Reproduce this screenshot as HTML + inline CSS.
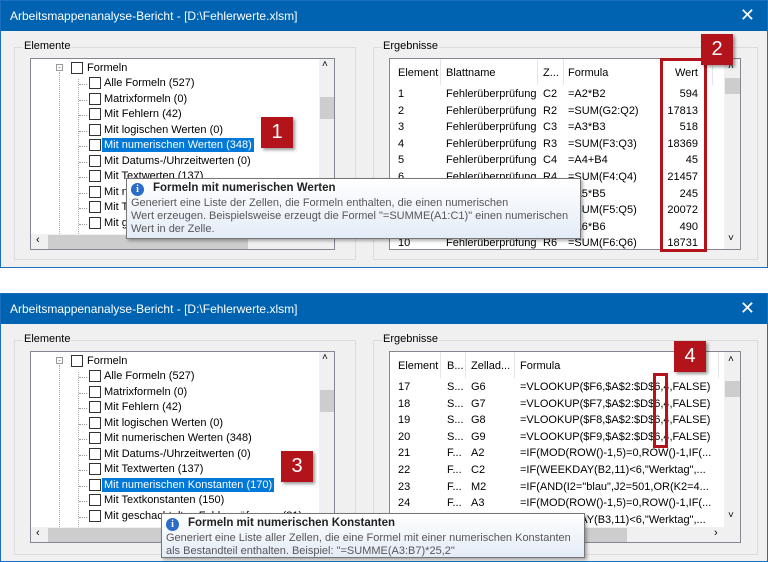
<!DOCTYPE html>
<html><head><meta charset="utf-8"><style>
*{box-sizing:border-box;margin:0;padding:0}
body{width:768px;height:562px;background:#fff;position:relative;overflow:hidden;font-family:"Liberation Sans",sans-serif;font-size:11px;color:#000}
.a{position:absolute;white-space:nowrap}
.win{position:absolute;left:0;width:768px;background:#f0f0f0;border:1px solid #1a6fc0}
.tb{position:absolute;left:0;top:0;width:100%;height:30px;background:#0063b1;color:#fff;font-size:12px}
.tb span{position:absolute;left:9px;top:8px}
.tb i{position:absolute;right:12px;top:4px;font-style:normal;font-size:18px}
.grp{position:absolute;border:1px solid #dcdcdc}
.gl{position:absolute;top:-8px;left:8px;background:#f0f0f0;padding:0 1px;font-size:11px}
.box{position:absolute;background:#fff;border:1px solid #828790;overflow:hidden}
.cb{position:absolute;width:12px;height:12px;border:1px solid #333;background:#fff}
.dot{position:absolute;border-top:1px dotted #999;width:8px}
.vs{position:absolute;background:#f0f0f0}
.thumb{position:absolute;background:#cdcdcd}
.badge{position:absolute;width:32px;height:31px;background:#b3141b;color:#fff;font-size:20px;text-align:center;line-height:31px;box-shadow:2px 2px 3px rgba(0,0,0,.4)}
.tip{position:absolute;border:1px solid #767676;background:linear-gradient(#fff,#e4ecf7);box-shadow:2px 2px 3px rgba(0,0,0,.3);color:#575757;font-size:11px;line-height:13px;white-space:nowrap}
.tip b{display:block;color:#222;font-size:11.5px;margin:3px 0 2px 22px}
.ic{position:absolute;left:4px;top:4px;width:13px;height:13px;border-radius:50%;background:#2a6cc8;color:#fff;font-size:10px;font-weight:bold;text-align:center;line-height:13px;font-family:"Liberation Serif",serif}
.sel{background:#0078d7;color:#fff}
.vl{position:absolute;top:0;width:1px;height:26px;background:#e5e5e5}
</style></head><body>

<!-- TOP WINDOW -->
<div class="win" style="top:0;height:268px">
 <div class="tb"><span>Arbeitsmappenanalyse-Bericht - [D:\Fehlerwerte.xlsm]</span><i>✕</i></div>
 <div class="grp" style="left:13px;top:46px;width:342px;height:213px"><div class="gl">Elemente</div></div>
 <div class="box" style="left:29px;top:57px;width:305px;height:192px">
  <div class="a" style="left:25px;top:5px;width:7px;height:7px;border:1px solid #999;font-size:8px;line-height:5px;text-align:center;color:#555">-</div>
  <div class="a" style="left:28px;top:13px;height:170px;border-left:1px dotted #aaa"></div>
  <div class="a" style="left:47px;top:20px;height:165px;border-left:1px dotted #aaa"></div>
  <div class="cb" style="left:40px;top:3px"></div><div class="a" style="left:56px;top:3px">Formeln</div>
  <div class="dot" style="left:48px;top:25px"></div><div class="cb" style="left:58px;top:18px"></div><div class="a" style="left:73px;top:18px">Alle Formeln (527)</div>
  <div class="dot" style="left:48px;top:41px"></div><div class="cb" style="left:58px;top:34px"></div><div class="a" style="left:73px;top:34px">Matrixformeln (0)</div>
  <div class="dot" style="left:48px;top:56px"></div><div class="cb" style="left:58px;top:49px"></div><div class="a" style="left:73px;top:49px">Mit Fehlern (42)</div>
  <div class="dot" style="left:48px;top:72px"></div><div class="cb" style="left:58px;top:65px"></div><div class="a" style="left:73px;top:65px">Mit logischen Werten (0)</div>
  <div class="dot" style="left:48px;top:87px"></div><div class="cb" style="left:58px;top:80px"></div><div class="a sel" style="left:71px;top:79px;padding:1px 2px">Mit numerischen Werten (348)</div>
  <div class="dot" style="left:48px;top:103px"></div><div class="cb" style="left:58px;top:96px"></div><div class="a" style="left:73px;top:96px">Mit Datums-/Uhrzeitwerten (0)</div>
  <div class="dot" style="left:48px;top:118px"></div><div class="cb" style="left:58px;top:111px"></div><div class="a" style="left:73px;top:111px">Mit Textwerten (137)</div>
  <div class="dot" style="left:48px;top:134px"></div><div class="cb" style="left:58px;top:127px"></div><div class="a" style="left:73px;top:127px">Mit n</div>
  <div class="dot" style="left:48px;top:149px"></div><div class="cb" style="left:58px;top:142px"></div><div class="a" style="left:73px;top:142px">Mit T</div>
  <div class="dot" style="left:48px;top:165px"></div><div class="cb" style="left:58px;top:158px"></div><div class="a" style="left:73px;top:158px">Mit g</div>
  <div class="vs" style="left:288px;top:0;width:16px;height:175px"><div class="a" style="left:3px;top:0;font-size:10px">˄</div><div class="thumb" style="left:1px;top:38px;width:14px;height:22px"></div></div>
  <div class="vs" style="left:0;top:175px;width:304px;height:16px"><div class="a" style="left:5px;top:0;font-size:11px">‹</div><div class="thumb" style="left:17px;top:1px;width:200px;height:14px"></div></div>
 </div>
 <div class="grp" style="left:372px;top:46px;width:385px;height:213px"><div class="gl">Ergebnisse</div></div>
 <div class="box" style="left:388px;top:57px;width:352px;height:192px">
  <div class="vl" style="left:50px"></div><div class="vl" style="left:147px"></div><div class="vl" style="left:173px"></div><div class="vl" style="left:272px"></div><div class="vl" style="left:322px"></div>
  <div class="a" style="left:8px;top:8px">Element</div><div class="a" style="left:56px;top:8px">Blattname</div><div class="a" style="left:153px;top:8px">Z...</div><div class="a" style="left:178px;top:8px">Formula</div><div class="a" style="left:284px;top:8px;width:24px;text-align:right">Wert</div>
  <div class="a" style="left:8px;top:27px;line-height:16.6px">1<br>2<br>3<br>4<br>5<br>6<br>7<br>8<br>9<br>10</div>
  <div class="a" style="left:56px;top:27px;line-height:16.6px">Fehlerüberprüfung<br>Fehlerüberprüfung<br>Fehlerüberprüfung<br>Fehlerüberprüfung<br>Fehlerüberprüfung<br>Fehlerüberprüfung<br>Fehlerüberprüfung<br>Fehlerüberprüfung<br>Fehlerüberprüfung<br>Fehlerüberprüfung</div>
  <div class="a" style="left:153px;top:27px;line-height:16.6px">C2<br>R2<br>C3<br>R3<br>C4<br>R4<br>C5<br>R5<br>C6<br>R6</div>
  <div class="a" style="left:178px;top:27px;line-height:16.6px">=A2*B2<br>=SUM(G2:Q2)<br>=A3*B3<br>=SUM(F3:Q3)<br>=A4+B4<br>=SUM(F4:Q4)<br>=A5*B5<br>=SUM(F5:Q5)<br>=A6*B6<br>=SUM(F6:Q6)</div>
  <div class="a" style="left:260px;top:27px;width:48px;text-align:right;line-height:16.6px">594<br>17813<br>518<br>18369<br>45<br>21457<br>245<br>20072<br>490<br>18731</div>
  <div class="vs" style="left:334px;top:0;width:17px;height:191px"><div class="a" style="left:4px;top:2px;font-size:10px">˄</div><div class="thumb" style="left:1px;top:19px;width:15px;height:16px"></div><div class="a" style="left:4px;top:174px;font-size:10px">˅</div></div>
 </div>
 <div class="a" style="left:659px;top:57px;width:47px;height:194px;border:3px solid #b3141b"></div>
 <div class="badge" style="left:700px;top:33px">2</div>
 <div class="badge" style="left:260px;top:116px">1</div>
 <div class="tip" style="left:125px;top:177px;width:455px;height:61px;padding-left:4px">
  <div class="ic">i</div><b>Formeln mit numerischen Werten</b>
  Generiert eine Liste der Zellen, die Formeln enthalten, die einen numerischen<br>Wert erzeugen. Beispielsweise erzeugt die Formel "=SUMME(A1:C1)" einen numerischen<br>Wert in der Zelle.
 </div>
</div>

<!-- BOTTOM WINDOW -->
<div class="win" style="top:293px;height:269px">
 <div class="tb"><span>Arbeitsmappenanalyse-Bericht - [D:\Fehlerwerte.xlsm]</span><i>✕</i></div>
 <div class="grp" style="left:13px;top:46px;width:342px;height:215px"><div class="gl">Elemente</div></div>
 <div class="box" style="left:29px;top:57px;width:305px;height:192px">
  <div class="a" style="left:25px;top:5px;width:7px;height:7px;border:1px solid #999;font-size:8px;line-height:5px;text-align:center;color:#555">-</div>
  <div class="a" style="left:28px;top:13px;height:170px;border-left:1px dotted #aaa"></div>
  <div class="a" style="left:47px;top:20px;height:165px;border-left:1px dotted #aaa"></div>
  <div class="cb" style="left:40px;top:3px"></div><div class="a" style="left:56px;top:3px">Formeln</div>
  <div class="dot" style="left:48px;top:25px"></div><div class="cb" style="left:58px;top:18px"></div><div class="a" style="left:73px;top:18px">Alle Formeln (527)</div>
  <div class="dot" style="left:48px;top:41px"></div><div class="cb" style="left:58px;top:34px"></div><div class="a" style="left:73px;top:34px">Matrixformeln (0)</div>
  <div class="dot" style="left:48px;top:56px"></div><div class="cb" style="left:58px;top:49px"></div><div class="a" style="left:73px;top:49px">Mit Fehlern (42)</div>
  <div class="dot" style="left:48px;top:72px"></div><div class="cb" style="left:58px;top:65px"></div><div class="a" style="left:73px;top:65px">Mit logischen Werten (0)</div>
  <div class="dot" style="left:48px;top:87px"></div><div class="cb" style="left:58px;top:80px"></div><div class="a" style="left:73px;top:80px">Mit numerischen Werten (348)</div>
  <div class="dot" style="left:48px;top:103px"></div><div class="cb" style="left:58px;top:96px"></div><div class="a" style="left:73px;top:96px">Mit Datums-/Uhrzeitwerten (0)</div>
  <div class="dot" style="left:48px;top:118px"></div><div class="cb" style="left:58px;top:111px"></div><div class="a" style="left:73px;top:111px">Mit Textwerten (137)</div>
  <div class="dot" style="left:48px;top:134px"></div><div class="cb" style="left:58px;top:127px"></div><div class="a sel" style="left:71px;top:126px;padding:1px 2px">Mit numerischen Konstanten (170)</div>
  <div class="dot" style="left:48px;top:149px"></div><div class="cb" style="left:58px;top:142px"></div><div class="a" style="left:73px;top:142px">Mit Textkonstanten (150)</div>
  <div class="dot" style="left:48px;top:165px"></div><div class="cb" style="left:58px;top:158px"></div><div class="a" style="left:73px;top:158px">Mit geschachtelten Fehlerprüfungen (81)</div>
  <div class="vs" style="left:288px;top:0;width:16px;height:175px"><div class="a" style="left:3px;top:0;font-size:10px">˄</div><div class="thumb" style="left:1px;top:38px;width:14px;height:22px"></div></div>
  <div class="vs" style="left:0;top:175px;width:304px;height:16px"><div class="a" style="left:5px;top:0;font-size:11px">‹</div><div class="thumb" style="left:17px;top:1px;width:200px;height:14px"></div></div>
 </div>
 <div class="grp" style="left:372px;top:46px;width:385px;height:215px"><div class="gl">Ergebnisse</div></div>
 <div class="box" style="left:388px;top:57px;width:352px;height:192px">
  <div class="vl" style="left:50px"></div><div class="vl" style="left:75px"></div><div class="vl" style="left:124px"></div><div class="vl" style="left:328px"></div>
  <div class="a" style="left:8px;top:8px">Element</div><div class="a" style="left:57px;top:8px">B...</div><div class="a" style="left:81px;top:8px">Zellad...</div><div class="a" style="left:130px;top:8px">Formula</div>
  <div class="a" style="left:8px;top:27px;line-height:16.6px">17<br>18<br>19<br>20<br>21<br>22<br>23<br>24</div>
  <div class="a" style="left:57px;top:27px;line-height:16.6px">S...<br>S...<br>S...<br>S...<br>F...<br>F...<br>F...<br>F...</div>
  <div class="a" style="left:81px;top:27px;line-height:16.6px">G6<br>G7<br>G8<br>G9<br>A2<br>C2<br>M2<br>A3</div>
  <div class="a" style="left:130px;top:27px;line-height:16.6px">=VLOOKUP($F6,$A$2:$D$6,4,FALSE)<br>=VLOOKUP($F7,$A$2:$D$6,4,FALSE)<br>=VLOOKUP($F8,$A$2:$D$6,4,FALSE)<br>=VLOOKUP($F9,$A$2:$D$6,4,FALSE)<br>=IF(MOD(ROW()-1,5)=0,ROW()-1,IF(...<br>=IF(WEEKDAY(B2,11)&lt;6,"Werktag",...<br>=IF(AND(I2="blau",J2=501,OR(K2=4...<br>=IF(MOD(ROW()-1,5)=0,ROW()-1,IF(...<br>=IF(WEEKDAY(B3,11)&lt;6,"Werktag",...</div>
  <div class="vs" style="left:334px;top:0;width:17px;height:175px"><div class="a" style="left:4px;top:2px;font-size:10px">˄</div><div class="thumb" style="left:1px;top:29px;width:15px;height:16px"></div><div class="a" style="left:4px;top:158px;font-size:10px">˅</div></div>
  <div class="vs" style="left:0;top:175px;width:351px;height:16px"><div class="thumb" style="left:17px;top:1px;width:220px;height:14px"></div><div class="a" style="left:324px;top:0;font-size:11px">›</div></div>
 </div>
 <div class="a" style="left:652px;top:79px;width:15px;height:75px;border:3px solid #b3141b"></div>
 <div class="badge" style="left:673px;top:47px">4</div>
 <div class="badge" style="left:280px;top:157px">3</div>
 <div class="tip" style="left:160px;top:219px;width:424px;height:45px;padding-left:4px">
  <div class="ic">i</div><b>Formeln mit numerischen Konstanten</b>
  Generiert eine Liste aller Zellen, die eine Formel mit einer numerischen Konstanten<br>als Bestandteil enthalten. Beispiel: "=SUMME(A3:B7)*25,2"
 </div>
</div>
</body></html>
